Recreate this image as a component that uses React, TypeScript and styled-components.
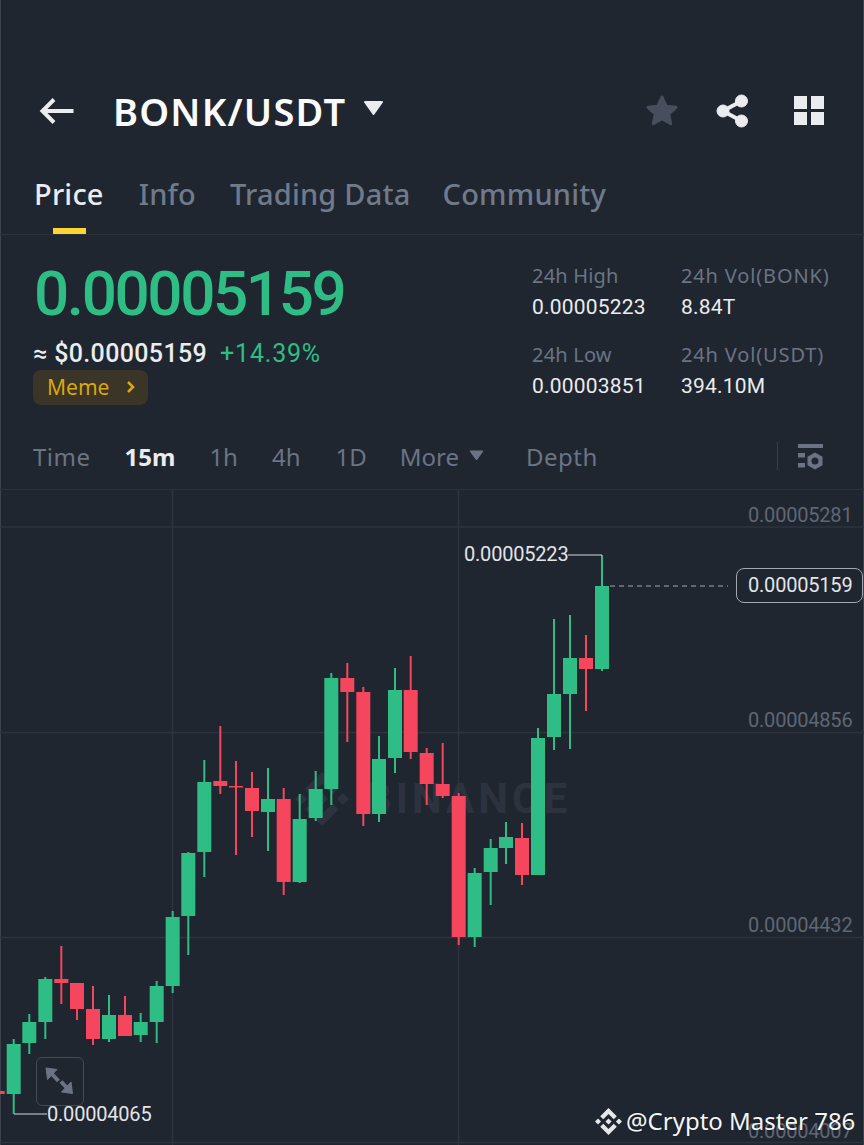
import React from 'react';
import styled, { createGlobalStyle } from 'styled-components';

const GREEN = '#2ebd85';
const RED = '#f6465d';
const BG = '#1f2630';

const GlobalStyle = createGlobalStyle`
  html, body {
    margin: 0;
    padding: 0;
    background: ${BG};
  }
  * {
    box-sizing: border-box;
  }
`;

const Page = styled.div`
  position: relative;
  width: 864px;
  height: 1145px;
  overflow: hidden;
  display: flex;
  flex-direction: column;
  background: ${BG};
  box-shadow: inset 1px 0 0 #3d424e, inset -1px 0 0 #3d424e;
  font-family: 'Noto Sans', 'Liberation Sans', sans-serif;
`;

const Header = styled.header`
  height: 78px;
  margin-top: 72px;
  display: flex;
  align-items: center;
  padding: 0 40px 0 39px;
`;

const Title = styled.h1`
  margin: 0 0 0 39px;
  font-size: 38px;
  font-weight: 600;
  letter-spacing: 1.2px;
  color: #fbfbfc;
`;

const TitleCaret = styled.svg`
  margin-left: 17px;
  margin-bottom: 6px;
`;

const HeaderActions = styled.div`
  margin-left: auto;
  display: flex;
  align-items: center;
  gap: 37px;
`;

const GridIcon = styled.svg`
  margin-left: 9px;
`;

const Tabs = styled.nav`
  height: 85px;
  display: flex;
  align-items: flex-start;
  padding: 21px 0 0 34px;
  border-bottom: 1px solid #2b313b;
`;

const Tab = styled.div<{ $active?: boolean; $gap: number }>`
  position: relative;
  height: 63px;
  margin-right: ${(p) => p.$gap}px;
  font-size: 29px;
  line-height: 46px;
  font-weight: 500;
  letter-spacing: 0.2px;
  color: ${(p) => (p.$active ? '#eaecef' : '#6f7a8b')};

  &::after {
    content: '';
    display: ${(p) => (p.$active ? 'block' : 'none')};
    position: absolute;
    left: 19px;
    bottom: 0;
    width: 33px;
    height: 6px;
    background: #fcd535;
  }
`;

const Summary = styled.section`
  height: 190px;
  display: flex;
  padding-left: 33px;
`;

const PriceColumn = styled.div`
  width: 499px;
`;

const LastPrice = styled.div`
  margin: 26px 0 0 1px;
  font-family: Roboto, sans-serif;
  font-size: 62px;
  line-height: 66px;
  font-weight: 500;
  letter-spacing: -2.4px;
  color: ${GREEN};
`;

const FiatRow = styled.div`
  margin-top: 12px;
  display: flex;
  gap: 13px;
  font-family: Roboto, sans-serif;
  font-size: 25px;
  line-height: 30px;
  font-weight: 500;
`;

const FiatPrice = styled.span`
  color: #eaecef;
  letter-spacing: 0.35px;
`;

const Change = styled.span`
  color: ${GREEN};
  font-weight: 400;
  letter-spacing: 0.8px;
`;

const Chip = styled.div`
  margin-top: 1px;
  width: 115px;
  height: 35px;
  padding-left: 14px;
  display: flex;
  align-items: center;
  gap: 17px;
  border-radius: 8px;
  background: #3a3527;
  color: #d9a70f;
  font-size: 21px;
`;

const StatGrid = styled.div`
  display: grid;
  grid-template-columns: 149px 1fr;
  grid-auto-rows: 79px;
  padding-top: 27px;
`;

const Stat = styled.div`
  display: flex;
  flex-direction: column;
  gap: 3px;
`;

const StatLabel = styled.span<{ $wide?: boolean }>`
  font-size: 20px;
  line-height: 28px;
  letter-spacing: ${(p) => (p.$wide ? '0.85px' : '0.2px')};
  white-space: nowrap;
  color: #6b7484;
`;

const StatValue = styled.span`
  font-family: Roboto, sans-serif;
  font-size: 21px;
  line-height: 28px;
  letter-spacing: 0.2px;
  color: #eaecef;
`;

const Intervals = styled.div`
  height: 66px;
  padding: 0 40px 1px 33px;
  display: flex;
  align-items: center;
  border-bottom: 1px solid #2b313b;
`;

const Interval = styled.span<{ $active?: boolean; $gap: number; $wide?: boolean }>`
  margin-right: ${(p) => p.$gap}px;
  font-size: 24px;
  font-weight: ${(p) => (p.$active ? 700 : 400)};
  letter-spacing: ${(p) => (p.$wide ? '0.5px' : '0')};
  color: ${(p) => (p.$active ? '#eaecef' : '#6b7484')};
`;

const MoreCaret = styled.svg`
  margin: 0 42px 2px -23px;
`;

const Divider = styled.span`
  width: 1px;
  height: 28px;
  margin-left: auto;
  margin-right: 19px;
  background: #3a404b;
`;

const Chart = styled.div`
  position: relative;
  flex: 1;
`;

const ChartSvg = styled.svg`
  position: relative;
  display: block;
  width: 864px;
  height: 655px;
`;

const Watermark = styled.div`
  position: absolute;
  left: 295px;
  top: 282px;
  display: flex;
  align-items: center;
  gap: 16px;
  font-family: Roboto, sans-serif;
  font-size: 42px;
  line-height: 54px;
  font-weight: 700;
  letter-spacing: 4px;
  color: #2d333e;
`;

const AxisLabel = styled.span<{ $top: number }>`
  position: absolute;
  left: 748px;
  top: ${(p) => p.$top}px;
  font-family: Roboto, sans-serif;
  font-size: 20px;
  line-height: 24px;
  letter-spacing: -0.2px;
  color: #5f6775;
`;

const ExtremeLabel = styled.span<{ $left: number; $top: number }>`
  position: absolute;
  left: ${(p) => p.$left}px;
  top: ${(p) => p.$top}px;
  font-family: Roboto, sans-serif;
  font-size: 20px;
  line-height: 24px;
  letter-spacing: -0.2px;
  color: #e3e5e9;
`;

const LastTag = styled.span`
  position: absolute;
  left: 736px;
  top: 78px;
  width: 127px;
  height: 35px;
  padding-left: 11px;
  border: 1.5px solid #a3a7ae;
  border-radius: 8px;
  font-family: Roboto, sans-serif;
  font-size: 20px;
  line-height: 33px;
  letter-spacing: -0.2px;
  color: #e3e5e9;
`;

const ExpandButton = styled.div`
  position: absolute;
  left: 36px;
  top: 567px;
  width: 48px;
  height: 49px;
  border: 1.5px solid #434a56;
  border-radius: 6px;
`;

const Credit = styled.div`
  position: absolute;
  left: 595px;
  top: 1106px;
  display: flex;
  align-items: center;
  gap: 4px;
  font-size: 24px;
  line-height: 30px;
  white-space: nowrap;
  color: #f4f5f6;
  text-shadow: 0 0 2px rgba(0, 0, 0, 0.35);
`;

const BinanceMark = ({ size, color }: { size: number; color: string }) => (
  <svg width={size} height={size} viewBox="0 0 126.61 126.61" fill={color}>
    <path d="M38.73 53.2l24.59-24.58 24.6 24.6 14.3-14.31L63.32 0 24.43 38.9z" />
    <path d="M0 63.31l14.3-14.31 14.31 14.31-14.31 14.3z" />
    <path d="M38.73 73.41l24.59 24.59 24.6-24.6 14.31 14.29-38.9 38.91-38.91-38.88z" />
    <path d="M98 63.31l14.3-14.31 14.31 14.31-14.3 14.3z" />
    <path d="M77.83 63.3L63.32 48.78 52.59 59.51l-1.24 1.23-2.54 2.54 14.51 14.5 14.51-14.47z" />
  </svg>
);

// cx, body top, body bottom, wick top, wick bottom, up?
type Candle = [number, number, number, number, number, boolean];

const candles: Candle[] = [
  [-2.3, 1091, 1094, 1091, 1094, false],
  [13.7, 1044, 1094, 1039, 1114, true],
  [29.3, 1022, 1043, 1014, 1054, true],
  [45.3, 979, 1022, 977, 1039, true],
  [61.3, 979, 983, 946, 1004, false],
  [77, 983, 1009, 983, 1020, false],
  [93, 1009, 1039, 986, 1045, false],
  [109, 1015, 1039, 995, 1042, true],
  [125, 1015, 1036, 996, 1036, false],
  [140.7, 1022, 1035, 1013, 1042, true],
  [156.7, 986, 1022, 981, 1043, true],
  [172.7, 917, 986, 911, 993, true],
  [188.3, 853, 916, 852, 955, true],
  [204.3, 782, 852, 760, 877, true],
  [220.3, 781, 786, 726, 794, false],
  [236, 786, 787.5, 761, 855, false],
  [252, 788, 811, 772, 837, false],
  [268, 799, 812, 768, 851, true],
  [283.7, 799, 882, 788, 895, false],
  [299.7, 819, 882, 794, 883, true],
  [315.7, 789, 818, 771, 821, true],
  [331.3, 678, 789, 673, 805, true],
  [347.3, 678, 692, 663, 742, false],
  [363.3, 692, 814, 687, 826, false],
  [379, 759, 814, 736, 822, true],
  [395, 690, 758, 668, 773, true],
  [410.7, 690, 752, 656, 759, false],
  [426.7, 753, 784, 748, 805, false],
  [442.7, 784, 796, 743, 798, false],
  [458.7, 796, 937, 793, 945, false],
  [474.7, 873, 937, 868, 947, true],
  [490.7, 848, 872, 839, 905, true],
  [506, 837, 848, 822, 864, true],
  [522, 838, 875, 823, 885, false],
  [538, 738, 875, 728, 875, true],
  [554, 694, 737, 619, 750, true],
  [570, 658, 694, 615, 749, true],
  [586, 658, 669, 635, 711, false],
  [602, 586, 669, 555, 671, true],
];

const App: React.FC = () => {
  return (
    <Page>
      <GlobalStyle />
      <Header>
        <svg width="35" height="28" viewBox="0 0 35 28" fill="none" stroke="#eaecef" strokeWidth="4">
          <path d="M15 2.5 3.5 14 15 25.5M4 14h30.5" />
        </svg>
        <Title>BONK/USDT</Title>
        <TitleCaret width="21" height="16" viewBox="0 0 21 16" fill="#eaecef" stroke="#eaecef" strokeWidth="2" strokeLinejoin="round">
          <path d="M2 2h17l-8.500 12z" />
        </TitleCaret>
        <HeaderActions>
          <svg width="34" height="34" viewBox="0 0 34 34" fill="#474f5d" stroke="#474f5d" strokeWidth="3" strokeLinejoin="round">
            <path d="M17 3l4.200 9.200 9.800 1.100-7.300 6.700 2 9.800-8.700-5-8.700 5 2-9.800L3 13.300l9.800-1.100z" />
          </svg>
          <svg width="32" height="34" viewBox="0 0 32 34" fill="#eaecef" stroke="#eaecef">
            <circle cx="7" cy="17" r="6" />
            <circle cx="25.500" cy="7" r="6" />
            <circle cx="25.500" cy="27" r="6" />
            <path d="M7 17 25.500 7M7 17l18.500 10" strokeWidth="4" />
          </svg>
          <GridIcon width="30" height="30" viewBox="0 0 30 30" fill="#eaecef">
            <rect width="13" height="13" />
            <rect x="17" width="13" height="13" />
            <rect y="16" width="13" height="13" />
            <rect x="17" y="16" width="13" height="13" />
          </GridIcon>
        </HeaderActions>
      </Header>

      <Tabs>
        <Tab $active $gap={35}>Price</Tab>
        <Tab $gap={34}>Info</Tab>
        <Tab $gap={32}>Trading Data</Tab>
        <Tab $gap={0}>Community</Tab>
      </Tabs>

      <Summary>
        <PriceColumn>
          <LastPrice>0.00005159</LastPrice>
          <FiatRow>
            <FiatPrice>≈ $0.00005159</FiatPrice>
            <Change>+14.39%</Change>
          </FiatRow>
          <Chip>
            Meme
            <svg width="10" height="14" viewBox="0 0 10 14" fill="none" stroke="#d9a70f" strokeWidth="2.600">
              <path d="M2 2l5 5-5 5" />
            </svg>
          </Chip>
        </PriceColumn>
        <StatGrid>
          <Stat>
            <StatLabel>24h High</StatLabel>
            <StatValue>0.00005223</StatValue>
          </Stat>
          <Stat>
            <StatLabel $wide>24h Vol(BONK)</StatLabel>
            <StatValue>8.84T</StatValue>
          </Stat>
          <Stat>
            <StatLabel>24h Low</StatLabel>
            <StatValue>0.00003851</StatValue>
          </Stat>
          <Stat>
            <StatLabel $wide>24h Vol(USDT)</StatLabel>
            <StatValue>394.10M</StatValue>
          </Stat>
        </StatGrid>
      </Summary>

      <Intervals>
        <Interval $wide $gap={34}>Time</Interval>
        <Interval $active $gap={34}>15m</Interval>
        <Interval $gap={34}>1h</Interval>
        <Interval $gap={35}>4h</Interval>
        <Interval $gap={33}>1D</Interval>
        <Interval $gap={33}>More</Interval>
        <MoreCaret width="15" height="11" viewBox="0 0 15 11" fill="#6b7484" stroke="#6b7484" strokeLinejoin="round">
          <path d="M1 1h13L7.500 10z" />
        </MoreCaret>
        <Interval $wide $gap={0}>Depth</Interval>
        <Divider />
        <svg width="27" height="27" viewBox="0 0 27 27" fill="#6b7484">
          <rect x="1" y="1" width="25" height="4" />
          <rect x="1" y="10" width="7" height="4.500" />
          <rect x="1" y="20" width="7" height="4.500" />
          <path
            fillRule="evenodd"
            d="M18 9.500l7.500 4.200v8.600L18 26.500l-7.500-4.200v-8.600zM18 14.500a3.500 3.500 0 1 0 0 7 3.500 3.500 0 0 0 0-7z"
          />
        </svg>
      </Intervals>

      <Chart>
        <Watermark>
          <BinanceMark size={54} color="#2d333e" />
          BINANCE
        </Watermark>
        <ChartSvg viewBox="0 490 864 655">
          <g stroke="#2e343f" strokeWidth="1.500">
            <path d="M0 527h864M0 732.500h864M0 937.500h864M0 1142.500h864" />
            <path d="M172.500 490v655M458.500 490v655" />
          </g>
          {candles.map(([cx, top, bottom, wickTop, wickBottom, up]) => {
            const fill = up ? GREEN : RED;
            return (
              <g key={cx} fill={fill}>
                <rect x={cx - 1} y={wickTop} width="2" height={wickBottom - wickTop} />
                <rect x={cx - 7} y={top} width="14" height={bottom - top} />
              </g>
            );
          })}
          <g fill="none" stroke="#d5d7db" strokeWidth="1.200">
            <path d="M568 555h34" />
            <path d="M14 1114h33" />
            <path d="M610 586h118" strokeDasharray="5 4" stroke="#a3a7ae" />
          </g>
        </ChartSvg>

        <AxisLabel $top={13}>0.00005281</AxisLabel>
        <AxisLabel $top={218}>0.00004856</AxisLabel>
        <AxisLabel $top={423}>0.00004432</AxisLabel>
        <AxisLabel $top={629}>0.00004007</AxisLabel>

        <ExtremeLabel $left={464} $top={52}>0.00005223</ExtremeLabel>
        <ExtremeLabel $left={47} $top={612}>0.00004065</ExtremeLabel>
        <LastTag>0.00005159</LastTag>

        <ExpandButton>
          <svg width="45" height="46" viewBox="0 0 45 46" fill="#6b7484" stroke="#6b7484" strokeLinejoin="round">
            <path d="M9 10l11 1.500-9.500 10z" />
            <path d="M35.500 35.500l-11-1.500 9.500-10z" />
            <path d="M14 15l7.500 8M31 31l-7-7.500" strokeWidth="4" />
          </svg>
        </ExpandButton>
      </Chart>

      <Credit>
        <BinanceMark size={27} color="#e6e7ea" />
        @Crypto Master 786
      </Credit>
    </Page>
  );
};

export default App;
